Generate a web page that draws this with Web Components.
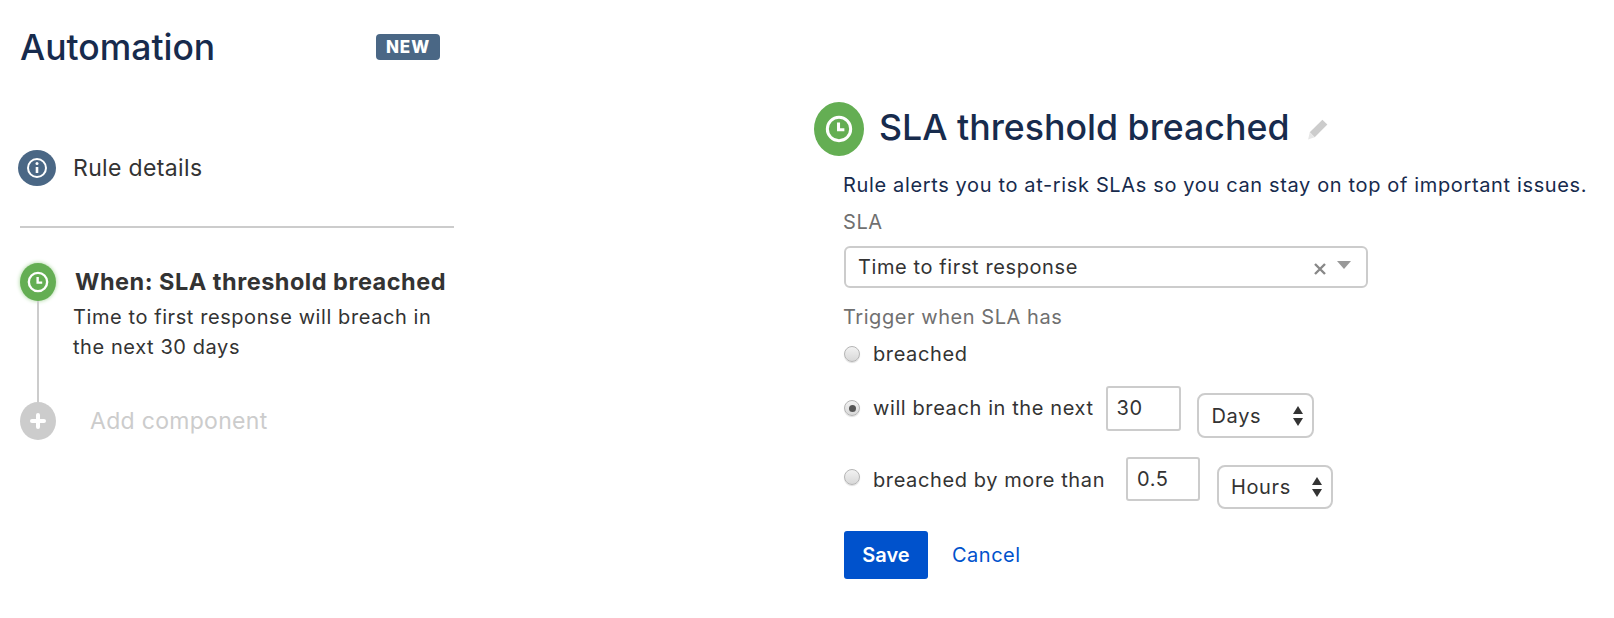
<!DOCTYPE html>
<html>
<head>
<meta charset="utf-8">
<title>Automation</title>
<style>
  html, body { margin: 0; background: #fff; }
  body { font-family: Inter, "Liberation Sans", sans-serif; color: #333; }
</style>
</head>
<body>
<rule-page></rule-page>

<script>
const clockIcon = (size) => `
  <svg width="${size}" height="${size}" viewBox="0 0 24 24" fill="none" stroke="#fff">
    <circle cx="12" cy="12" r="10" stroke-width="2.6"/>
    <path d="M11.6 6.5v6.2h5" stroke-width="2.6"/>
  </svg>`;

class StepIcon extends HTMLElement {
  constructor() {
    super();
    const kind = this.getAttribute('kind');
    let inner = '';
    if (kind === 'info') {
      inner = `<svg width="22" height="22" viewBox="0 0 22 22" fill="none" stroke="#fff">
        <circle cx="11" cy="11" r="9" stroke-width="2"/>
        <path d="M11 10v6" stroke-width="2.6"/>
        <circle cx="11" cy="6.6" r="1.5" fill="#fff" stroke="none"/>
      </svg>`;
    } else if (kind === 'clock') {
      inner = clockIcon(22);
    } else if (kind === 'clock-big') {
      inner = clockIcon(28);
    } else {
      inner = `<svg width="16" height="16" viewBox="0 0 16 16"><path d="M8 2v12M2 8h12" stroke="#fff" stroke-width="4" stroke-linecap="round"/></svg>`;
    }
    this.attachShadow({ mode: 'open' }).innerHTML = `
      <style>
        :host { display: flex; align-items: center; justify-content: center; flex: none; border-radius: 50%; width: 36px; height: 38px; box-sizing: border-box; }
        :host([kind="info"]) { background: #4a6785; width: 38px; height: 36px; }
        :host([kind="clock"]) { background: #64ae53; box-shadow: 0 0 4px #9fd293; }
        :host([kind="clock-big"]) { background: #64ae53; width: 50px; height: 54px; }
        :host([kind="add"]) { background: #ccc; }
        svg { display: block; }
      </style>
      ${inner}`;
  }
}
customElements.define('step-icon', StepIcon);

const sideTemplate = document.createElement('template');
sideTemplate.innerHTML = `
  <style>
    :host { display: block; width: 454px; flex: none; padding: 28px 0 0 18px; box-sizing: content-box; }
    .head { display: flex; align-items: center; justify-content: space-between; width: 420px; padding-left: 2px; height: 40px; }
    h1 { margin: 0; font-size: 35.5px; font-weight: 500; color: #172b4d; line-height: 40px; letter-spacing: 0; }
    .badge { background: #4a6785; color: #fff; font-size: 17px; font-weight: 800; letter-spacing: .9px; width: 64px; height: 26px; line-height: 26px; border-radius: 4px; text-align: center; margin-top: -3px; }
    .details { display: flex; align-items: center; gap: 17px; height: 36px; margin-top: 82px; font-size: 23px; letter-spacing: .35px; }
    hr { border: 0; height: 2px; background: #ccc; margin: 40px 0 0 2px; width: 434px; }
    .when { display: flex; margin: 35px 0 0 2px; }
    .rail { display: flex; flex-direction: column; align-items: center; width: 36px; flex: none; }
    .line { width: 2px; height: 101px; background: #ccc; }
    .body { margin-left: 17px; }
    .title { font-size: 23.5px; font-weight: 700; line-height: 30px; margin: 4px 0 0 2px; letter-spacing: .5px; white-space: nowrap; }
    .desc { font-size: 20px; line-height: 30px; margin-top: 5px; width: 380px; letter-spacing: .58px; }
    .add { color: #ccc; font-size: 23px; margin: 44px 0 0 17px; line-height: 30px; letter-spacing: .3px; }
  </style>
  <div class="head"><h1>Automation</h1><span class="badge">NEW</span></div>
  <div class="details"><step-icon kind="info"></step-icon><span>Rule details</span></div>
  <hr>
  <div class="when">
    <div class="rail">
      <step-icon kind="clock"></step-icon>
      <div class="line"></div>
      <step-icon kind="add"></step-icon>
    </div>
    <div class="body">
      <div class="title">When: SLA threshold breached</div>
      <div class="desc">Time to first response will breach in the next 30 days</div>
      <div class="add">Add component</div>
    </div>
  </div>`;

class SidePanel extends HTMLElement {
  constructor() {
    super();
    this.attachShadow({ mode: 'open' }).append(sideTemplate.content.cloneNode(true));
  }
}
customElements.define('side-panel', SidePanel);

class RadioRow extends HTMLElement {
  constructor() {
    super();
    this.attachShadow({ mode: 'open' }).innerHTML = `
      <style>
        :host { display: flex; align-items: flex-start; font-size: 20px; letter-spacing: .6px; }
        .dot { width: 16px; height: 16px; border-radius: 50%; box-sizing: border-box; flex: none; border: 1px solid #b5b5b5; background: linear-gradient(#f2f2f2, #d8d8d8); box-shadow: 0 1px 1px #ddd; display: flex; align-items: center; justify-content: center; }
        :host([checked]) .dot::after { content: ""; width: 7px; height: 7px; border-radius: 50%; background: #555; }
        .text { margin-left: 13px; line-height: 24px; margin-top: var(--text-top, -4px); white-space: nowrap; }
      </style>
      <span class="dot"></span>
      <span class="text"><slot></slot></span>
      <slot name="after"></slot>`;
  }
}
customElements.define('radio-row', RadioRow);

class NumberBox extends HTMLElement {
  constructor() {
    super();
    this.attachShadow({ mode: 'open' }).innerHTML = `
      <style>
        :host { display: block; box-sizing: border-box; border: 2px solid #ccc; border-radius: 3px; font-size: 20px; padding-left: 9px; background: #fff; flex: none; letter-spacing: .6px; }
      </style>
      <slot></slot>`;
  }
}
customElements.define('number-box', NumberBox);

class UnitSelect extends HTMLElement {
  constructor() {
    super();
    this.attachShadow({ mode: 'open' }).innerHTML = `
      <style>
        :host { display: flex; align-items: center; justify-content: space-between; box-sizing: border-box; border: 2px solid #ccc; border-radius: 8px; font-size: 20px; padding: 0 8px 0 13px; background: #fff; flex: none; letter-spacing: .6px; }
        svg { display: block; }
      </style>
      <span><slot></slot></span>
      <svg width="12" height="20" viewBox="0 0 12 20" fill="#333"><path d="M6 0l5 8H1zM6 20l-5-8h10z"/></svg>`;
  }
}
customElements.define('unit-select', UnitSelect);

const formTemplate = document.createElement('template');
formTemplate.innerHTML = `
  <style>
    :host { display: block; flex: none; padding-top: 102px; }
    .head { display: flex; align-items: center; height: 54px; margin-left: 1px; }
    h2 { margin: -4px 0 0 15px; font-size: 35.7px; font-weight: 500; color: #172b4d; line-height: 44px; white-space: nowrap; }
    .pencil { margin: 0 0 0 18px; display: block; }
    .form { margin-left: 30px; }
    .lead { color: #172b4d; font-size: 20px; line-height: 28px; margin-top: 15px; white-space: nowrap; letter-spacing: .64px; }
    .label { color: #707070; font-size: 20px; line-height: 28px; letter-spacing: .55px; }
    .sla-label { margin-top: 9px; }
    .sla { display: flex; align-items: center; width: 524px; height: 42px; margin: 10px 0 0 1px; box-sizing: border-box; border: 2px solid #ccc; border-radius: 6px; padding: 0 15px 0 12px; font-size: 20px; letter-spacing: .6px; }
    .sla span { flex: 1; }
    .sla svg { display: block; }
    .trigger { margin-top: 15px; }
    .rows { margin: 15px 0 0 1px; }
    .r2 { margin-top: 34px; }
    .r3 { margin-top: 31px; --text-top: -1px; }
    .after { display: flex; align-items: flex-start; }
    .days-n { width: 75px; height: 45px; line-height: 41px; margin: -14px 0 0 12px; }
    .days-u { width: 117px; height: 45px; margin: -7px 0 0 16px; }
    .hours-n { width: 74px; height: 44px; line-height: 40px; margin: -12px 0 0 21px; }
    .hours-u { width: 116px; height: 44px; margin: -4px 0 0 17px; padding-left: 12px; }
    .actions { display: flex; align-items: center; margin: 22px 0 0 1px; }
    .save { background: #0052cc; color: #fff; font-size: 20px; font-weight: 600; width: 84px; height: 48px; line-height: 48px; text-align: center; border-radius: 3px; }
    .cancel { color: #0052cc; font-size: 20px; margin-left: 24px; letter-spacing: .5px; }
  </style>
  <div class="head">
    <step-icon kind="clock-big"></step-icon>
    <h2>SLA threshold breached</h2>
    <svg class="pencil" width="22" height="22" viewBox="0 0 20 20"><path d="M14 1.5l4.5 4.5L7 17.5 2.5 13z" fill="#ccc"/><path d="M2.5 13L7 17.5 1 19.5z" fill="#e6e6e6"/></svg>
  </div>
  <div class="form">
    <div class="lead">Rule alerts you to at-risk SLAs so you can stay on top of important issues.</div>
    <div class="label sla-label">SLA</div>
    <div class="sla">
      <span>Time to first response</span>
      <svg width="14" height="14" viewBox="0 0 14 14" style="margin:3px 10px 0 0"><path d="M2 2l10 10M12 2L2 12" stroke="#888" stroke-width="2.4"/></svg>
      <svg width="14" height="8" viewBox="0 0 14 8" style="margin-top:-5px"><path d="M0 0h14L7 8z" fill="#999"/></svg>
    </div>
    <div class="label trigger">Trigger when SLA has</div>
    <div class="rows">
      <radio-row>breached</radio-row>
      <radio-row class="r2" checked>will breach in the next
        <span slot="after" class="after">
          <number-box class="days-n">30</number-box>
          <unit-select class="days-u">Days</unit-select>
        </span>
      </radio-row>
      <radio-row class="r3">breached by more than
        <span slot="after" class="after">
          <number-box class="hours-n">0.5</number-box>
          <unit-select class="hours-u">Hours</unit-select>
        </span>
      </radio-row>
    </div>
    <div class="actions"><span class="save">Save</span><span class="cancel">Cancel</span></div>
  </div>`;

class RuleForm extends HTMLElement {
  constructor() {
    super();
    this.attachShadow({ mode: 'open' }).append(formTemplate.content.cloneNode(true));
  }
}
customElements.define('rule-form', RuleForm);

class RulePage extends HTMLElement {
  constructor() {
    super();
    this.attachShadow({ mode: 'open' }).innerHTML = `
      <style>
        :host { display: flex; width: 1614px; height: 618px; overflow: hidden; }
        rule-form { margin-left: 341px; }
      </style>
      <side-panel></side-panel>
      <rule-form></rule-form>`;
  }
}
customElements.define('rule-page', RulePage);
</script>
</body>
</html>
